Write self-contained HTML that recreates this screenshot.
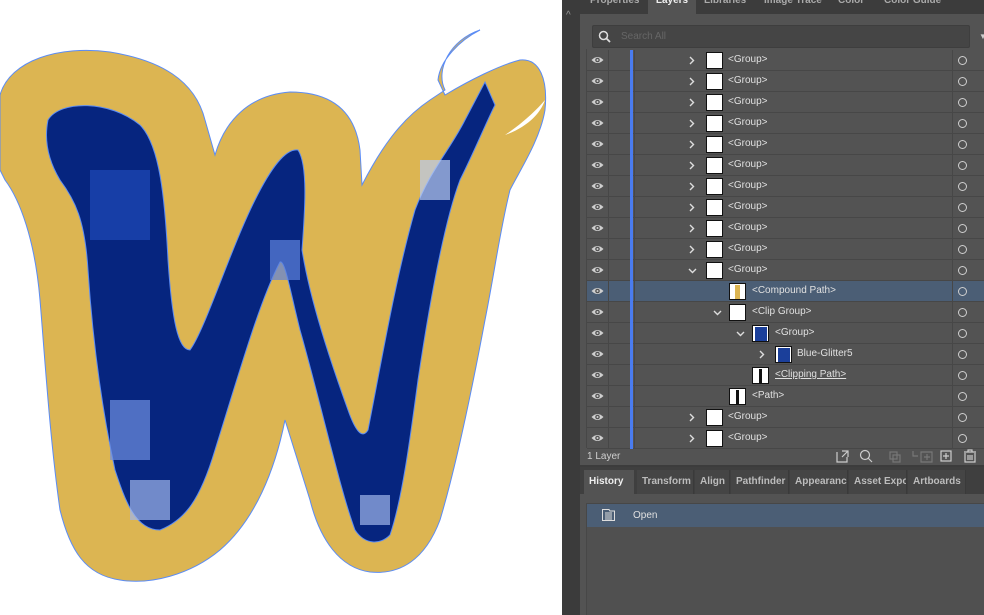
<!DOCTYPE html>
<html><head><meta charset="utf-8"><style>
*{margin:0;padding:0;box-sizing:border-box}
body{width:984px;height:615px;overflow:hidden;background:#535353;font-family:"Liberation Sans",sans-serif;font-size:10px;color:#d8d8d8;position:relative}
.abs{position:absolute}
.row{position:absolute;left:587px;width:397px;height:21px;border-bottom:1px solid #474747}
.row.sel{background:#4b5e75}
.eye{position:absolute;left:4px;top:5px}
.bar{position:absolute;left:43px;top:0;width:3px;height:21px;background:#4a7cf0}
.sep1{position:absolute;left:21px;top:0;width:1px;height:21px;background:#474747}
.sep2{position:absolute;left:47px;top:0;width:1px;height:21px;background:#474747}
.sep3{position:absolute;left:365px;top:0;width:1px;height:21px;background:#474747}
.circ{position:absolute;left:371px;top:6px;width:9px;height:9px;border:1.2px solid #cfcfcf;border-radius:50%}
.th{position:absolute;top:2px;width:17px;height:17px;background:#fff;border:1px solid #111}
.tx{position:absolute;top:4px;color:#e0e0e0;font-size:10px;white-space:nowrap}
.ch{position:absolute;top:3px;color:#ddd;font-size:11px}
.tab{position:absolute;top:470px;height:24px;line-height:24px;font-size:10px;font-weight:bold;color:#bcbcbc;background:#454545;border-right:1px solid #3a3a3a;padding-left:5px;overflow:hidden;white-space:nowrap}
</style></head><body>
<div class="abs" style="left:0;top:0;width:562px;height:615px;background:#fff"></div>
<svg class="abs" style="left:0;top:0" width="562" height="615">
<path fill="#dcb552" stroke="#5b8cf5" stroke-width="1" d="M0,95 C10,60 60,45 110,52 C160,60 195,80 205,120 L215,155 C225,120 250,95 290,92 C330,92 355,110 360,150 L362,185 C380,150 400,120 430,100 L445,90 C435,70 450,40 480,30 C460,40 440,60 438,80 L445,95 C470,80 500,65 520,60 C540,58 548,80 545,110 C540,140 520,170 510,190 C500,230 495,270 485,320 C470,400 455,470 440,520 C425,560 400,575 370,572 C340,568 320,540 310,500 L285,420 C275,470 255,520 220,550 C190,575 150,585 120,580 C85,575 70,550 60,510 C50,440 45,360 40,300 C35,240 20,200 5,180 L0,170 Z"/>
<path fill="#06257f" stroke="#5b8cf5" stroke-width="1" d="M48,120 C60,100 110,100 140,125 C160,145 165,200 168,260 C172,320 178,350 190,350 C205,330 230,250 255,200 C270,170 285,148 298,150 C308,165 305,210 302,250 C310,300 330,360 348,410 C355,430 362,440 368,430 C380,370 395,280 415,210 C430,170 450,150 465,120 L485,82 L495,105 C485,125 475,150 460,180 C445,220 430,300 418,380 C410,440 402,500 390,535 C380,545 365,545 355,530 C340,490 320,400 300,330 C290,290 285,260 280,262 C260,300 240,370 215,450 C200,500 185,520 160,530 C135,530 125,500 115,470 C100,400 92,330 88,270 C85,220 75,200 60,180 C48,160 44,140 48,120 Z"/>
<g opacity="0.7"><rect x="110" y="400" width="40" height="60" fill="#6f8fe0"/><rect x="130" y="480" width="40" height="40" fill="#9fb5ea"/><rect x="420" y="160" width="30" height="40" fill="#b9cbef"/><rect x="270" y="240" width="30" height="40" fill="#5e82dc"/><rect x="360" y="495" width="30" height="30" fill="#9fb5ea"/><rect x="90" y="170" width="60" height="70" fill="#1f49b8"/></g>
<path fill="#fff" d="M505,135 C520,125 535,112 545,100 C540,115 525,128 505,135 Z"/>
</svg>
<div class="abs" style="left:562px;top:0;width:18px;height:615px;background:#3b3b3b"></div>
<div class="abs" style="left:566px;top:10px;color:#999;font-size:10px">^</div>
<div class="abs" style="left:580px;top:0;width:404px;height:14px;background:#3c3c3c"></div>
<div class="abs" style="left:580px;top:-5px;font-size:10px;color:#aaa;font-weight:bold;white-space:nowrap">
<span style="position:absolute;left:10px">Properties</span>
<span style="position:absolute;left:68px;width:48px;height:19px;background:#535353;text-align:center;color:#eee">Layers</span>
<span style="position:absolute;left:124px">Libraries</span>
<span style="position:absolute;left:184px">Image Trace</span>
<span style="position:absolute;left:258px">Color</span>
<span style="position:absolute;left:304px">Color Guide</span>
</div>
<div class="abs" style="left:592px;top:25px;width:378px;height:23px;background:#454545;border:1px solid #3e3e3e;border-radius:2px"></div>
<svg class="abs" style="left:598px;top:30px" width="14" height="14"><circle cx="5.5" cy="5.5" r="4" stroke="#ddd" stroke-width="1.5" fill="none"/><path d="M8.5 8.5 L12 12" stroke="#ddd" stroke-width="1.8"/></svg>
<div class="abs" style="left:621px;top:31px;color:#666">Search All</div>
<div class="abs" style="left:979px;top:32px;color:#ccc;font-size:8px">▼</div>
<div class="abs" style="left:586px;top:49px;width:398px;height:399px;background:#535353;border-left:1px solid #474747"></div>
<div id="rows"></div>
<script>
var eye='<svg class="eye" width="13" height="10"><path d="M0.5 5 Q6.5 -1 12.5 5 Q6.5 11 0.5 5Z" fill="#cfcfcf"/><circle cx="6.5" cy="5" r="2.3" fill="#535353"/><circle cx="6.5" cy="5" r="1" fill="#cfcfcf"/></svg>';
var R=[];for(var i=0;i<10;i++)R.push([102,119,141,'>','&lt;Group&gt;']);
R.push([102,119,141,'v','&lt;Group&gt;']);
R.push([null,142,165,'','&lt;Compound Path&gt;','g']);
R.push([127,142,165,'v','&lt;Clip Group&gt;']);
R.push([150,165,188,'v','&lt;Group&gt;','b']);
R.push([172,188,210,'>','Blue-Glitter5','b']);
R.push([null,165,188,'','<u>&lt;Clipping Path&gt;</u>','k']);
R.push([null,142,165,'','&lt;Path&gt;','k']);
R.push([102,119,141,'>','&lt;Group&gt;']);R.push([102,119,141,'>','&lt;Group&gt;']);
var h='';for(var i=0;i<R.length;i++){var r=R[i];
h+='<div class="row'+(i==11?' sel':'')+'" style="top:'+(50+i*21)+'px">'+eye+'<div class="sep1"></div><div class="bar"></div><div class="sep2"></div><div class="sep3"></div><div class="circ"></div>';
if(r[3]=='>')h+='<svg class="ch" style="left:'+r[0]+'px;top:6px" width="6" height="9"><path d="M1 1 L4.5 4.5 L1 8" stroke="#ddd" stroke-width="1.4" fill="none"/></svg>';
if(r[3]=='v')h+='<svg class="ch" style="left:'+(r[0]-1)+'px;top:8px" width="9" height="6"><path d="M1 1 L4.5 4.5 L8 1" stroke="#ddd" stroke-width="1.4" fill="none"/></svg>';
var inner='';if(r[5]=='g')inner='<div style="position:absolute;left:5px;top:1px;width:5px;height:14px;background:#dcb552"></div>';
if(r[5]=='b')inner='<div style="position:absolute;left:2px;top:1px;width:12px;height:14px;background:#1b3f9a"></div>';
if(r[5]=='k')inner='<div style="position:absolute;left:6px;top:1px;width:3px;height:14px;background:#111"></div>';
h+='<div class="th" style="left:'+r[1]+'px">'+inner+'</div><div class="tx" style="left:'+r[2]+'px">'+r[4]+'</div></div>';}
document.getElementById('rows').innerHTML=h;
</script>
<div class="abs" style="left:587px;top:451px;color:#cfcfcf;font-size:10px">1 Layer</div>
<svg class="abs" style="left:835px;top:448px" width="145" height="16" fill="none" stroke="#ccc" stroke-width="1.2">
<path d="M2 4 V14 H12 V9 M7 3 H13 V9 M13 3 L7 9"/>
<circle cx="30" cy="7" r="4.5"/><path d="M33 10 L37 14"/>
<rect x="55" y="4" width="7" height="7" stroke="#777"/><rect x="58" y="7" width="7" height="7" stroke="#777"/>
<path d="M78 3 V8 H83 M92 6 V12 M89 9 H95 M86 4 H97 V14 H86Z" stroke="#777"/>
<rect x="106" y="3" width="10" height="10"/><path d="M111 5 V11 M108 8 H114"/>
<path d="M129 4 H141 M133 4 V2 H137 V4 M130 5 V14 H140 V5 M133 7 V12 M135 7 V12 M137 7 V12"/>
</svg>
<div class="abs" style="left:580px;top:465px;width:404px;height:2px;background:#3c3c3c"></div>
<div class="abs" style="left:580px;top:467px;width:404px;height:27px;background:#3f3f3f"></div>
<div class="tab" style="left:584px;width:50px;background:#535353;color:#eee;border:none">History</div>
<div class="tab" style="left:637px;width:57px">Transform</div>
<div class="tab" style="left:695px;width:35px">Align</div>
<div class="tab" style="left:731px;width:58px">Pathfinder</div>
<div class="tab" style="left:790px;width:58px">Appearance</div>
<div class="tab" style="left:849px;width:58px">Asset Export</div>
<div class="tab" style="left:908px;width:58px">Artboards</div>
<div class="abs" style="left:586px;top:503px;width:398px;height:112px;background:#505050;border-left:1px solid #474747;border-top:1px solid #474747"></div>
<div class="abs" style="left:587px;top:504px;width:397px;height:23px;background:#4b5e75"></div>
<svg class="abs" style="left:601px;top:508px" width="15" height="14" fill="none" stroke="#ddd" stroke-width="1"><path d="M1.5 1.5 H8 L9 3 H13.5 V12.5 H1.5Z M4 5 H11 M4 7 H11 M4 9 H11 M4 11 H11"/></svg>
<div class="abs" style="left:633px;top:510px;color:#e0e0e0">Open</div>
</body></html>
